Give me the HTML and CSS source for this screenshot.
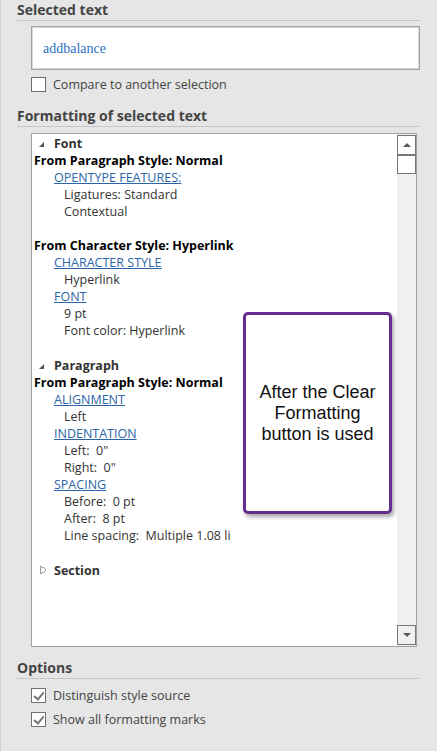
FILE: index.html
```
<!DOCTYPE html>
<html lang="en">
<head>
  <meta charset="UTF-8" />
  <title>Reveal Formatting</title>
  <meta name="viewport" content="width=device-width, initial-scale=1" />
  <link rel="stylesheet" href="styles.css">
</head>
<body>
  <div class="pane">
    <h2 class="pane-title">Selected text</h2>
    <div class="sample"><span>addbalance</span></div>
    <label class="check check-first"><span class="box"></span>Compare to another selection</label>

    <h2 class="pane-title title-gap">Formatting of selected text</h2>
    <div class="reveal">
      <div class="reveal-body">
        <div class="group"><span class="tri open"></span>Font</div>
        <div class="src">From Paragraph Style: Normal</div>
        <div class="link"><a>OPENTYPE FEATURES:</a></div>
        <div class="val">Ligatures: Standard</div>
        <div class="val">Contextual</div>
        <div class="blank"></div>
        <div class="src">From Character Style: Hyperlink</div>
        <div class="link"><a>CHARACTER STYLE</a></div>
        <div class="val">Hyperlink</div>
        <div class="link"><a>FONT</a></div>
        <div class="val">9 pt</div>
        <div class="val">Font color: Hyperlink</div>
        <div class="blank pre-group"></div>
        <div class="group"><span class="tri open"></span>Paragraph</div>
        <div class="src">From Paragraph Style: Normal</div>
        <div class="link"><a>ALIGNMENT</a></div>
        <div class="val">Left</div>
        <div class="link"><a>INDENTATION</a></div>
        <div class="val">Left:&nbsp; 0"</div>
        <div class="val">Right:&nbsp; 0"</div>
        <div class="link"><a>SPACING</a></div>
        <div class="val">Before:&nbsp; 0 pt</div>
        <div class="val">After:&nbsp; 8 pt</div>
        <div class="val">Line spacing:&nbsp; Multiple 1.08 li</div>
        <div class="blank pre-group"></div>
        <div class="group"><span class="tri"></span>Section</div>
      </div>
      <div class="scroll">
        <div class="scroll-btn"><span class="arrow up"></span></div>
        <div class="thumb"></div>
        <div class="track"></div>
        <div class="scroll-btn"><span class="arrow down"></span></div>
      </div>
      <div class="callout">After the Clear<br>Formatting<br>button is used</div>
    </div>

    <h2 class="pane-title options-gap">Options</h2>
    <label class="check check-opt"><span class="box checked"></span>Distinguish style source</label>
    <label class="check check-opt2"><span class="box checked"></span>Show all formatting marks</label>
  </div>
</body>
</html>
```

FILE: styles.css
```
html, body {
  margin: 0;
  height: 100%;
}
body {
  background: #e6e6e6;
  font-family: "Open Sans", "Noto Sans", sans-serif;
  color: #444;
  border-left: 1px solid #cfcfcf;
  box-sizing: border-box;
}
.pane {
  padding: 0 17px 0 16px;
  display: flex;
  flex-direction: column;
}
.pane-title {
  margin: 0;
  font-size: 14px;
  font-weight: 700;
  line-height: 20px;
  color: #444;
  border-bottom: 1px solid #c6c6c6;
}
.title-gap {
  margin-top: 14px;
}
.options-gap {
  margin-top: 11px;
}
.sample {
  margin: 5px 0 0 14px;
  height: 44px;
  box-sizing: border-box;
  background: #fff;
  border: 1px solid #a3a3a3;
  box-shadow: inset 0 0 0 1px #d8d8d8;
  display: flex;
  align-items: center;
  padding: 1px 0 0 11px;
}
.sample span {
  font-family: "Liberation Serif", serif;
  font-size: 14px;
  color: #2e70c0;
}
.check {
  display: flex;
  align-items: center;
  gap: 7px;
  margin-left: 14px;
  font-size: 12.5px;
  color: #444;
  height: 15px;
}
.check-first {
  margin-top: 7px;
}
.check-opt {
  margin-top: 9px;
}
.check-opt2 {
  margin-top: 9px;
}
.box {
  width: 15px;
  height: 15px;
  box-sizing: border-box;
  border: 1px solid #6f6f6f;
  background: #fff;
  position: relative;
  flex: none;
}
.box.checked::after {
  content: "";
  position: absolute;
  left: 4px;
  top: 1px;
  width: 4px;
  height: 8px;
  border: solid #777;
  border-width: 0 2px 2px 0;
  transform: rotate(40deg);
}
.reveal {
  position: relative;
  margin: 6px 0 0 14px;
  width: 386px;
  height: 514px;
  box-sizing: border-box;
  background: #fff;
  border: 1px solid #a3a3a3;
  display: flex;
}
.reveal-body {
  flex: 1;
  padding: 1px 0 0 2px;
  font-size: 12.5px;
  line-height: 17px;
  color: #333;
}
.group {
  height: 17px;
  line-height: 17px;
  font-weight: 700;
  color: #333;
  padding-left: 5px;
  display: flex;
  align-items: center;
}
.tri {
  width: 15px;
  height: 17px;
  position: relative;
}
.tri::after {
  content: "";
  position: absolute;
  left: 0;
  top: 7px;
  width: 0;
  height: 0;
}
.tri.open::after {
  top: 7px;
  border-left: 5px solid transparent;
  border-bottom: 5px solid #555;
}
.tri:not(.open)::after {
  left: 1px;
  top: 4px;
  width: 5px;
  height: 8px;
  background: linear-gradient(to top right, transparent 45%, #999 45%, #999 58%, transparent 58%) top / 100% 50% no-repeat,
              linear-gradient(to bottom right, transparent 45%, #999 45%, #999 58%, transparent 58%) bottom / 100% 50% no-repeat;
  border-left: 1px solid #999;
}
.src {
  font-weight: 700;
  color: #000;
}
.link {
  padding-left: 20px;
}
.link a {
  color: #2b65a8;
  text-decoration: underline;
}
.val {
  padding-left: 30px;
}
.blank {
  height: 17px;
}
.blank.pre-group {
  height: 18px;
}
.scroll {
  width: 19px;
  flex: none;
  background: #f0f0f0;
  display: flex;
  flex-direction: column;
  padding: 1px 0;
}
.scroll-btn {
  height: 20px;
  box-sizing: border-box;
  border: 1px solid #777;
  display: flex;
  align-items: center;
  justify-content: center;
}
.scroll-btn:first-child {
  background: #fff;
}
.thumb {
  height: 20px;
  box-sizing: border-box;
  background: #fff;
  border: 1px solid #777;
  border-top-width: 2px;
  margin-top: -1px;
}
.track {
  flex: 1;
}
.arrow {
  width: 0;
  height: 0;
  border-left: 4px solid transparent;
  border-right: 4px solid transparent;
}
.arrow.up {
  border-bottom: 4px solid #5a5a5a;
}
.arrow.down {
  border-top: 4px solid #5a5a5a;
}
.callout {
  position: absolute;
  left: 211px;
  top: 178px;
  width: 149px;
  height: 202px;
  box-sizing: border-box;
  background: #fff;
  border: 3px solid #662d91;
  border-radius: 5px;
  box-shadow: 2px 3px 4px rgba(0, 0, 0, 0.35);
  display: flex;
  align-items: center;
  justify-content: center;
  text-align: center;
  font-family: "Liberation Sans", Arial, sans-serif;
  font-size: 18px;
  line-height: 21px;
  color: #111;
}
```
